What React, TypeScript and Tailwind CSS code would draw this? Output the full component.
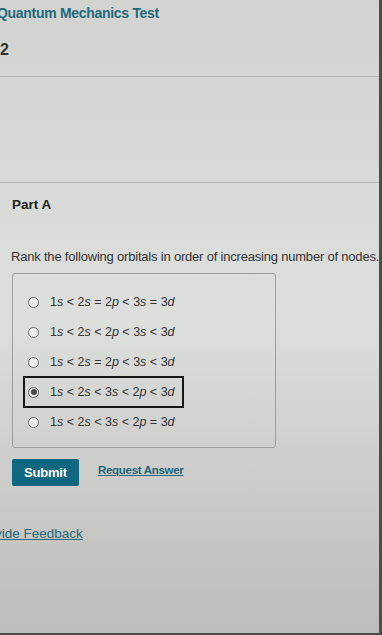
import React from "react";

const options = [
  "1s < 2s = 2p < 3s = 3d",
  "1s < 2s < 2p < 3s < 3d",
  "1s < 2s = 2p < 3s < 3d",
  "1s < 2s < 3s < 2p < 3d",
  "1s < 2s < 3s < 2p = 3d",
];

const selected = 3;

// italicise the orbital letters, leave numbers and signs upright
function Orbitals({ text }: { text: string }) {
  return (
    <span>
      {text.split("").map((ch, i) =>
        /[spd]/.test(ch) ? (
          <i key={i}>{ch}</i>
        ) : (
          <span key={i}>{ch}</span>
        )
      )}
    </span>
  );
}

function Radio({ checked }: { checked: boolean }) {
  return checked ? (
    <div className="w-[11px] h-[11px] rounded-full border-[1.5px] border-[#5a5a5a] bg-[#e8e8e6] flex items-center justify-center shrink-0">
      <div className="w-[6px] h-[6px] rounded-full bg-[#4a4a4a]" />
    </div>
  ) : (
    <div className="w-[11px] h-[11px] rounded-full border-[1.5px] border-[#6b6b6b] bg-[#eeeeec] shrink-0" />
  );
}

export default function App() {
  return (
    <div
      className="h-[635px] w-[382px] overflow-hidden border-r-[3px] border-b-2 border-[#4d4d4b] bg-linear-to-b from-[#d2d3d1] via-[#dddfdd] to-[#bcbcb8] text-[#2e2e2e]"
      style={{ fontFamily: '"Liberation Sans", Arial, sans-serif' }}
    >
      <div className="pt-[4px] h-[22px]">
        <div className="-ml-[3px] text-[14px] leading-[18px] font-bold tracking-[-0.3px] text-[#226a7b] whitespace-nowrap">
          Quantum Mechanics Test
        </div>
      </div>

      <div className="mt-[18px] h-[20px] leading-[20px] text-[16px] font-bold text-[#333]">
        2
      </div>

      <div className="mt-[16px] h-px bg-[#b4b5b3]" />
      <div className="mt-[105px] h-px bg-[#b4b5b3]" />

      <div className="mt-[13px] ml-[12px] text-[13.5px] leading-[18px] font-bold text-[#222]">
        Part A
      </div>

      <div className="mt-[34px] ml-[11px] text-[13px] leading-[18px] tracking-[-0.2px] whitespace-nowrap text-[#333]">
        Rank the following orbitals in order of increasing number of nodes.
      </div>

      <div className="mt-[7px] ml-[12px] w-[264px] h-[175px] border border-[#9d9e9c] rounded-[3px] pt-[12px] flex flex-col">
        {options.map((opt, i) => (
          <div
            key={i}
            className={`-mb-[2px] ml-[10px] w-[161px] h-[32px] shrink-0 pl-[3px] flex items-center gap-[11px] border-2 ${
              i === selected ? "border-[#151515]" : "border-transparent"
            }`}
          >
            <Radio checked={i === selected} />
            <div className="text-[12.5px] text-[#333] whitespace-nowrap">
              <Orbitals text={opt} />
            </div>
          </div>
        ))}
      </div>

      <div className="mt-[11px] ml-[12px] flex items-center gap-[19px]">
        <button className="w-[67px] h-[27px] bg-[#0f6880] rounded-[2px] text-white text-[13px] font-bold tracking-[-0.2px]">
          Submit
        </button>
        <a className="-mt-[4px] text-[11.5px] font-bold tracking-[-0.3px] text-[#1f6579] underline">
          Request Answer
        </a>
      </div>

      <div className="mt-[39px] -ml-[26px] text-[13.5px] leading-[18px] text-[#236779] underline whitespace-nowrap">
        Provide Feedback
      </div>
    </div>
  );
}
